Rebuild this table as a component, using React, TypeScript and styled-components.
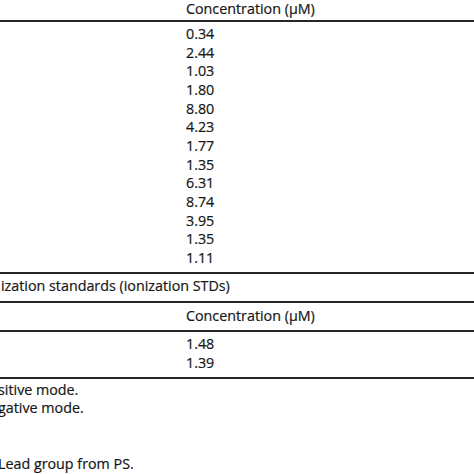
import React from "react";
import styled, { createGlobalStyle } from "styled-components";

const GlobalStyle = createGlobalStyle`
  html, body {
    margin: 0;
    padding: 0;
    background: #ffffff;
  }
  body {
    font-family: "Open Sans", "Noto Sans", "Liberation Sans", sans-serif;
    color: #161616;
    overflow: hidden;
  }
`;

const Page = styled.div`
  width: 474px;
  height: 474px;
  overflow: hidden;
  font-size: 14.3px;
  line-height: 18.67px;
  white-space: nowrap;
  -webkit-text-stroke: 0.2px #161616;
`;

const Rule = styled.div`
  height: 2px;
  background: #262626;
`;

const Row = styled.div`
  display: grid;
  grid-template-columns: 186px 1fr;
  line-height: 18.67px;
`;

const HeaderRow = styled(Row)`
  height: 20px;
  box-sizing: border-box;
  align-items: end;
  padding-bottom: 4.3px;
`;

const SubHeadRow = styled(Row)`
  padding: 4px 0;
`;

const Block = styled.div<{ $top: number; $bottom: number }>`
  padding-top: ${(p) => p.$top}px;
  padding-bottom: ${(p) => p.$bottom}px;
`;

const SectionRow = styled.div`
  height: 27px;
  box-sizing: border-box;
  padding-top: 2.5px;
  padding-left: 1px;
`;

const Cell = styled.div``;

const Footnotes = styled.div`
  padding-top: 2px;
  margin-left: -2px;
`;

const Footnote = styled.div`
  line-height: 18.5px;
  height: 18.5px;
`;

const values1 = [
  "0.34",
  "2.44",
  "1.03",
  "1.80",
  "8.80",
  "4.23",
  "1.77",
  "1.35",
  "6.31",
  "8.74",
  "3.95",
  "1.35",
  "1.11",
];

const values2 = ["1.48", "1.39"];

const notes = [
  "sitive mode.",
  "gative mode.",
  "",
  "",
  "Lead group from PS.",
];

export default function App() {
  return (
    <>
      <GlobalStyle />
      <Page>
        <HeaderRow>
          <Cell />
          <Cell>Concentration (μM)</Cell>
        </HeaderRow>
        <Rule />
        <Block $top={3} $bottom={4.3}>
          {values1.map((v, i) => (
            <Row key={i}>
              <Cell />
              <Cell>{v}</Cell>
            </Row>
          ))}
        </Block>
        <Rule />
        <SectionRow>ization standards (ionization STDs)</SectionRow>
        <Rule />
        <SubHeadRow>
          <Cell />
          <Cell>Concentration (μM)</Cell>
        </SubHeadRow>
        <Rule />
        <Block $top={3.5} $bottom={4.4}>
          {values2.map((v, i) => (
            <Row key={i}>
              <Cell />
              <Cell>{v}</Cell>
            </Row>
          ))}
        </Block>
        <Rule />
        <Footnotes>
          {notes.map((n, i) => (
            <Footnote key={i}>{n || "\u00a0"}</Footnote>
          ))}
        </Footnotes>
      </Page>
    </>
  );
}
